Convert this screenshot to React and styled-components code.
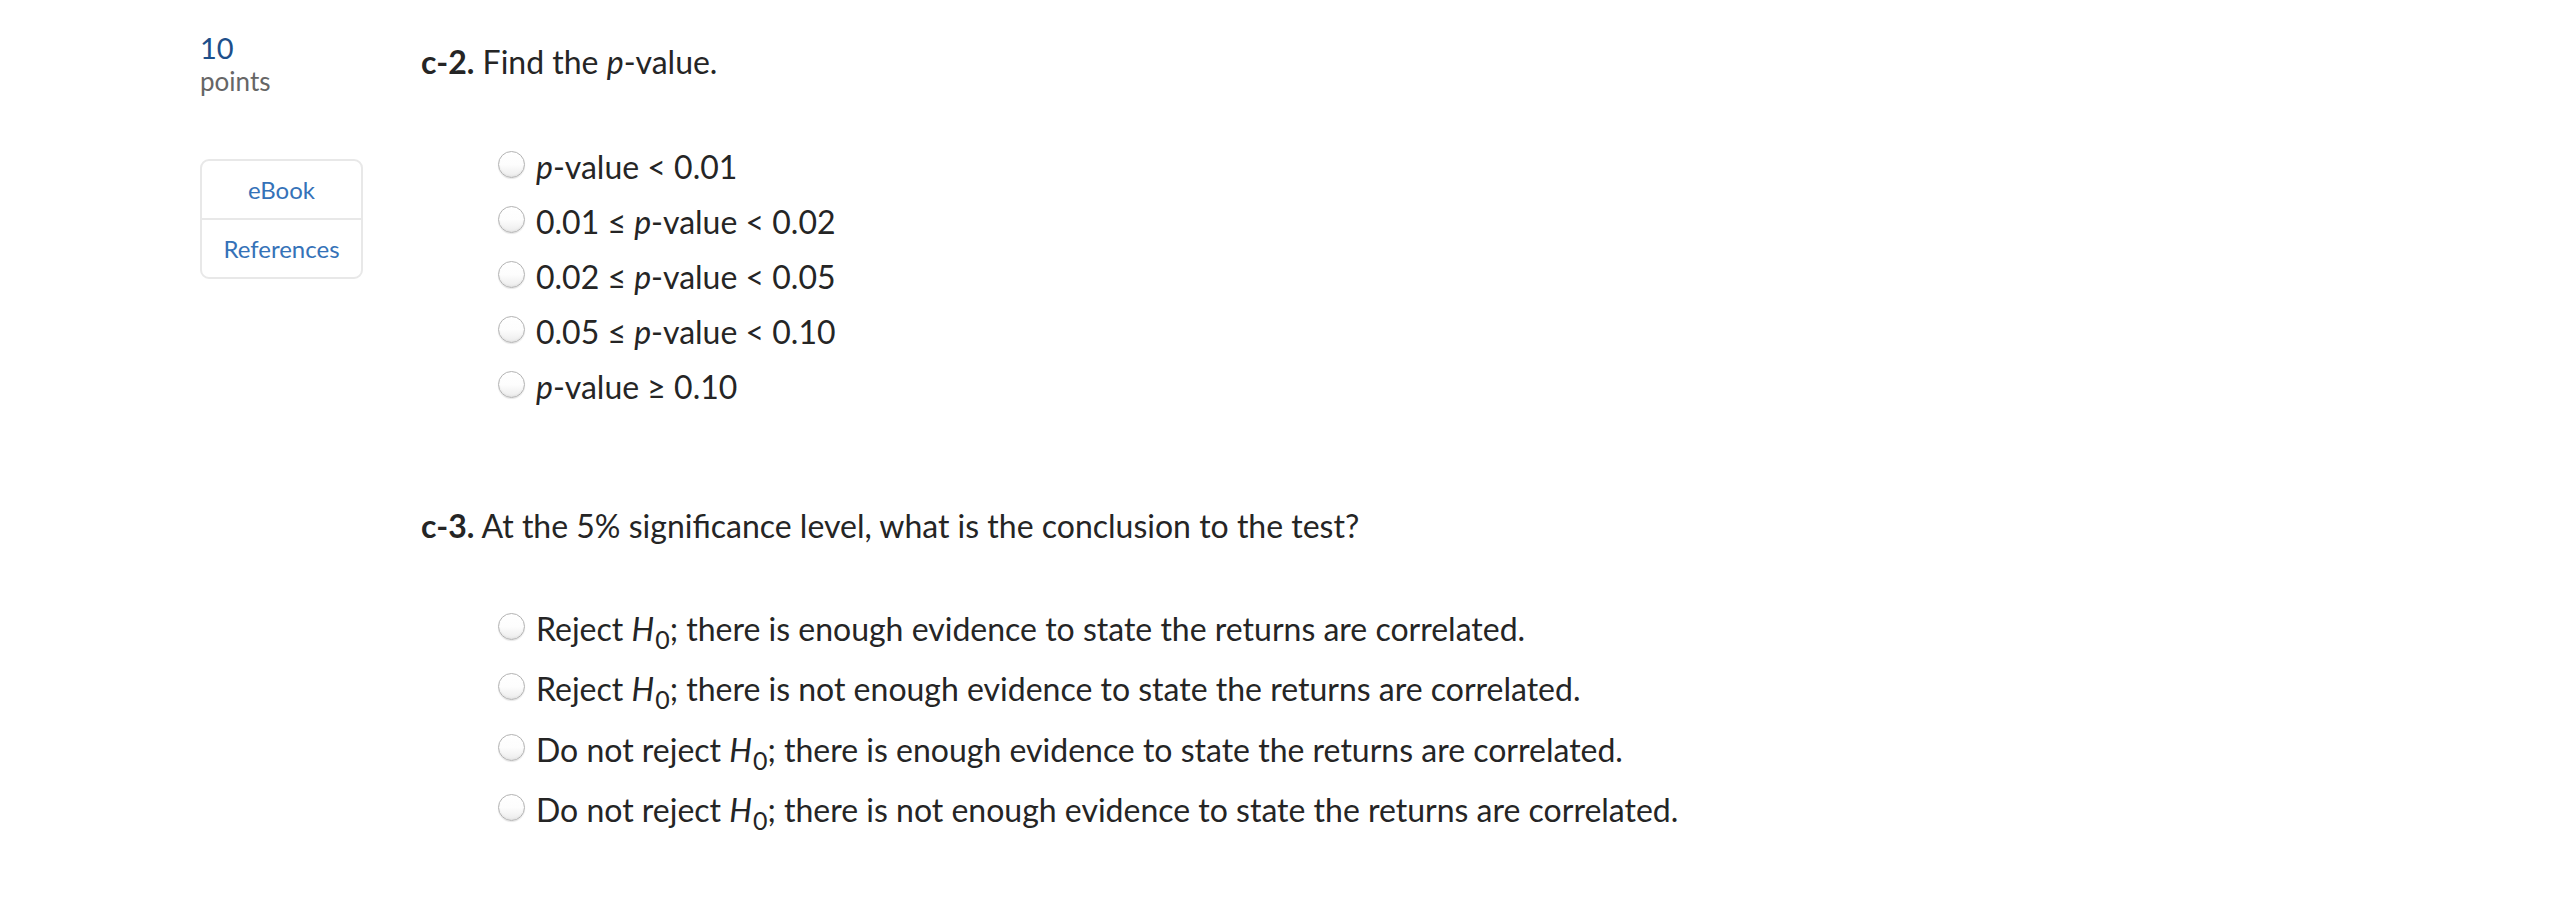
import React from 'react';
import styled, { createGlobalStyle } from 'styled-components';

const GlobalStyle = createGlobalStyle`
  html, body {
    margin: 0;
    padding: 0;
    background: #ffffff;
  }
  body {
    font-family: 'Lato', 'Liberation Sans', sans-serif;
    color: #252525;
  }
`;

const Page = styled.div`
  display: flex;
  align-items: flex-start;
  padding-left: 200px;
  min-height: 922px;
  box-sizing: border-box;
`;

const Sidebar = styled.aside`
  width: 163px;
  flex-shrink: 0;
  margin-right: 58px;
  padding-top: 31px;
`;

const PointsValue = styled.div`
  font-size: 29px;
  line-height: 34px;
  color: #1d4f8a;
`;

const PointsLabel = styled.div`
  font-size: 26px;
  line-height: 30px;
  color: #666666;
  margin-top: 1px;
`;

const ResourceBox = styled.div`
  margin-top: 63px;
  border: 2px solid #e8e8e8;
  border-radius: 9px;
  display: flex;
  flex-direction: column;
`;

const ResourceLink = styled.a`
  height: 57px;
  display: flex;
  align-items: center;
  justify-content: center;
  font-size: 24px;
  color: #3572b8;
  text-decoration: none;
  cursor: pointer;
  & + & {
    border-top: 2px solid #e8e8e8;
  }
`;

const Main = styled.main`
  flex: 1;
  padding-top: 42px;
`;

const Question = styled.section`
  & + & {
    margin-top: ${(p) => p.$gap || 100}px;
  }
`;

const Prompt = styled.h2`
  margin: 0;
  font-size: 32px;
  line-height: 40px;
  font-weight: 400;
  color: #252525;
`;

const Label = styled.b`
  font-weight: 700;
`;

const Options = styled.div`
  display: flex;
  flex-direction: column;
  padding-left: 77px;
  margin-top: ${(p) => p.$top}px;
`;

const OptionRow = styled.label`
  display: flex;
  align-items: center;
  height: ${(p) => p.$height}px;
  font-size: 32px;
  color: #252525;
  cursor: pointer;
`;

const Radio = styled.span`
  width: 27px;
  height: 27px;
  box-sizing: border-box;
  border-radius: 50%;
  border: 1.5px solid #b3b3b3;
  background: linear-gradient(#ffffff 0%, #fdfdfd 50%, #ececec 100%);
  box-shadow: inset 0 -1px 2px rgba(0, 0, 0, 0.06), 0 1px 1px rgba(0, 0, 0, 0.1);
  flex-shrink: 0;
  margin-right: 11px;
  margin-bottom: 4px;
`;

const OptionText = styled.span`
  white-space: nowrap;
`;

const Var = styled.i`
  font-style: italic;
`;

const Sub = styled.sub`
  font-size: 0.78em;
  font-style: normal;
  vertical-align: -0.32em;
  line-height: 0;
  margin-left: 1px;
`;

const P = () => <Var>p</Var>;
const H0 = () => (
  <>
    <Var>H</Var>
    <Sub>0</Sub>
  </>
);

const pOptions = [
  <><P />-value &lt; 0.01</>,
  <>0.01 ≤ <P />-value &lt; 0.02</>,
  <>0.02 ≤ <P />-value &lt; 0.05</>,
  <>0.05 ≤ <P />-value &lt; 0.10</>,
  <><P />-value ≥ 0.10</>,
];

const conclusions = [
  <>Reject <H0 />; there is enough evidence to state the returns are correlated.</>,
  <>Reject <H0 />; there is not enough evidence to state the returns are correlated.</>,
  <>Do not reject <H0 />; there is enough evidence to state the returns are correlated.</>,
  <>Do not reject <H0 />; there is not enough evidence to state the returns are correlated.</>,
];

const App = () => {
  return (
    <>
      <GlobalStyle />
      <Page>
        <Sidebar>
          <PointsValue>10</PointsValue>
          <PointsLabel>points</PointsLabel>
          <ResourceBox>
            <ResourceLink>eBook</ResourceLink>
            <ResourceLink>References</ResourceLink>
          </ResourceBox>
        </Sidebar>
        <Main>
          <Question>
            <Prompt>
              <Label>c-2.</Label> Find the <P />-value.
            </Prompt>
            <Options $top={57}>
              {pOptions.map((text, i) => (
                <OptionRow key={i} $height={55}>
                  <Radio />
                  <OptionText>{text}</OptionText>
                </OptionRow>
              ))}
            </Options>
          </Question>
          <Question $gap={92}>
            <Prompt>
              <Label>c-3.</Label> At the 5% significance level, what is the conclusion to the test?
            </Prompt>
            <Options $top={52}>
              {conclusions.map((text, i) => (
                <OptionRow key={i} $height={60.5}>
                  <Radio />
                  <OptionText>{text}</OptionText>
                </OptionRow>
              ))}
            </Options>
          </Question>
        </Main>
      </Page>
    </>
  );
};

export default App;
